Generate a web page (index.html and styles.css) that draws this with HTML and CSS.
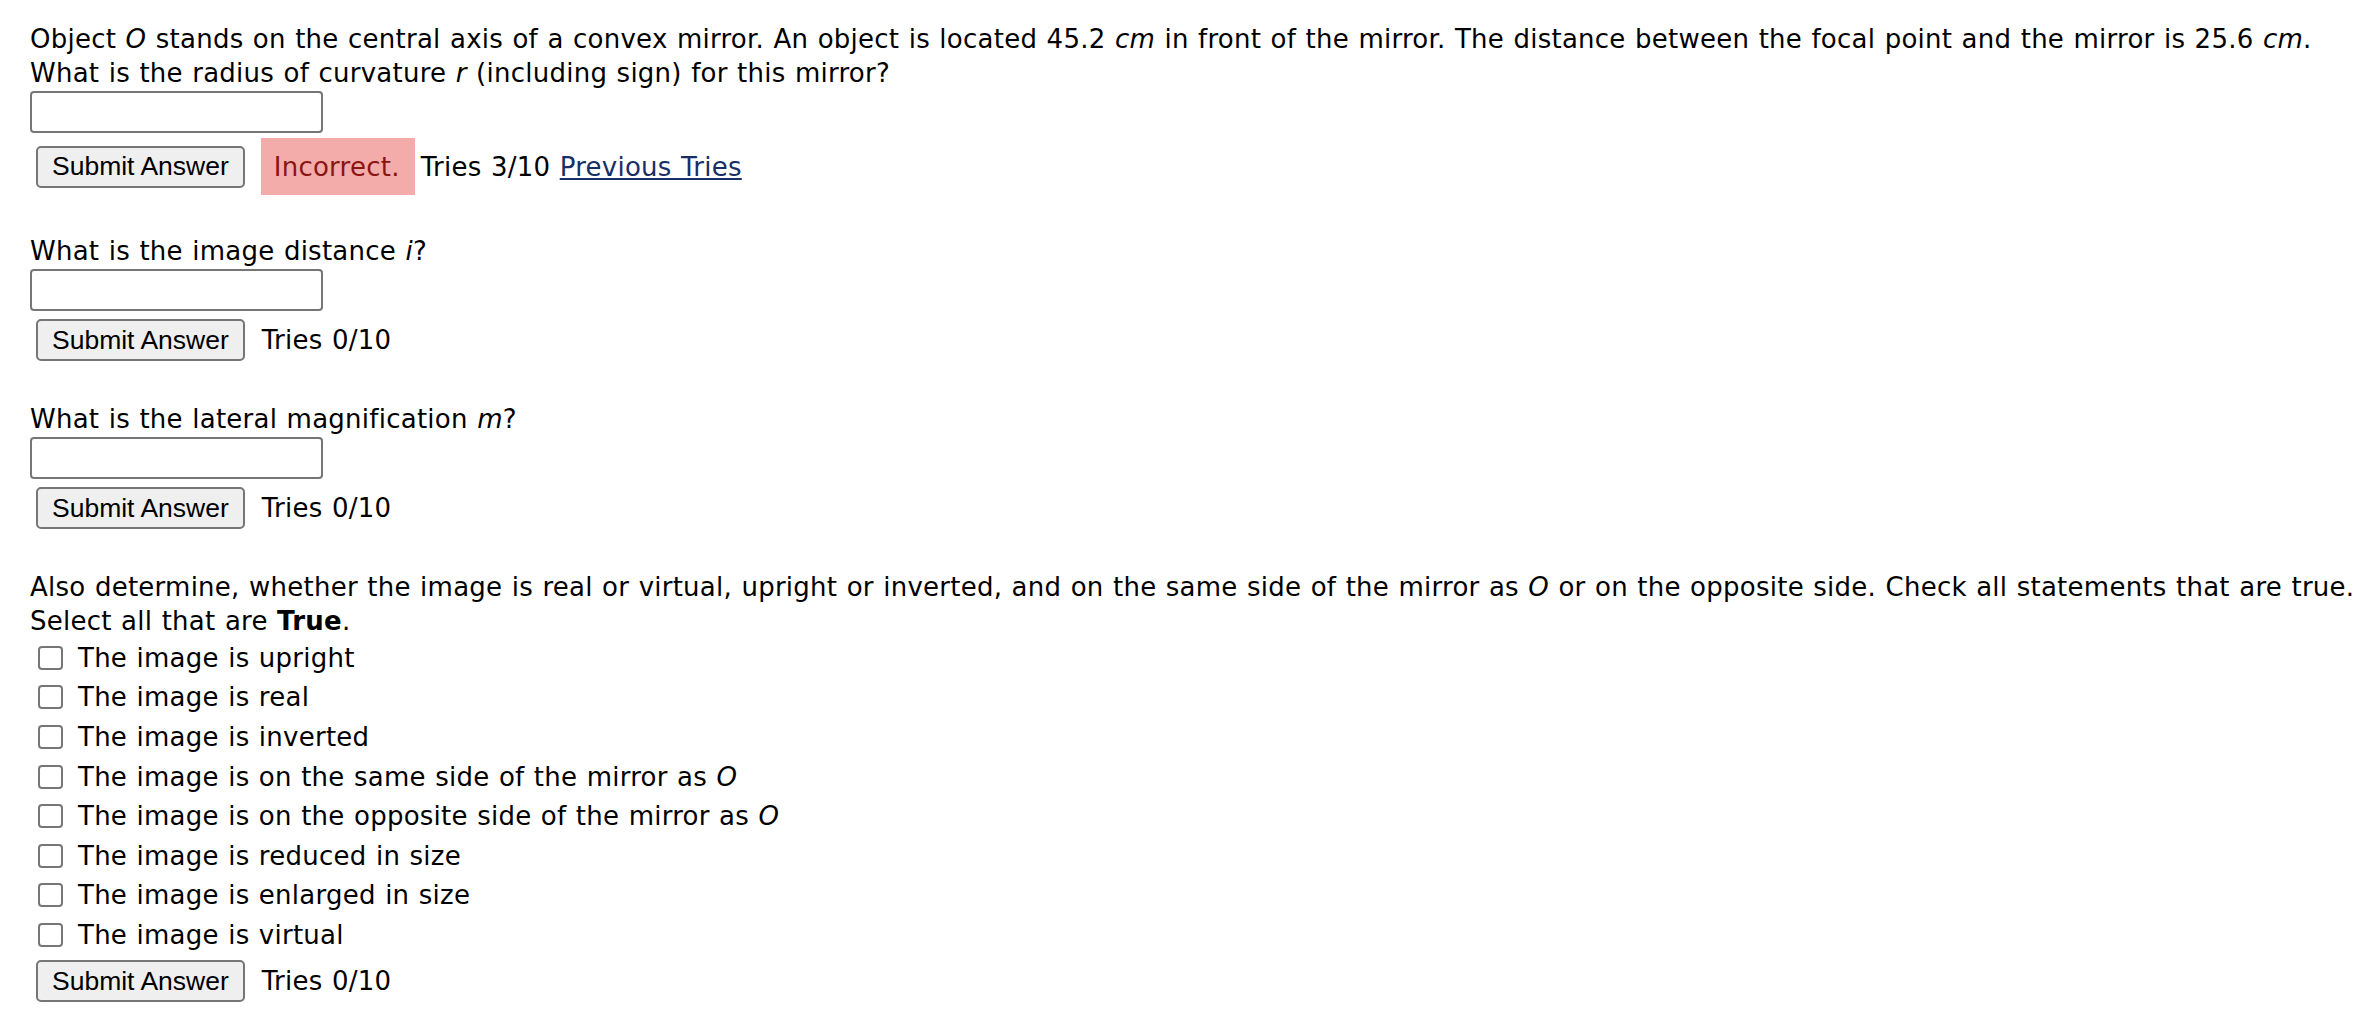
FILE: index.html
```html
<!DOCTYPE html>
<html>
<head>
	<meta charset="utf-8">
	<title>Convex mirror</title>
	<link rel="stylesheet" href="styles.css">
</head>
<body>
	<div class="problem">

		<div class="part">
			<div class="qtext">
				Object <i>O</i> stands on the central axis of a convex mirror. An object is located 45.2 <i>cm</i> in front of the mirror. The distance between the focal point and the mirror is 25.6 <i>cm</i>.<br>
				What is the radius of curvature <i>r</i> (including sign) for this mirror?
			</div>
			<input type="text" class="answer">
			<div class="actions first">
				<button class="submit">Submit Answer</button>
				<span class="incorrect">Incorrect.</span>
				<span class="tries">Tries 3/10 <a href="#">Previous Tries</a></span>
			</div>
		</div>

		<div class="part">
			<div class="qtext">What is the image distance <i>i</i>?</div>
			<input type="text" class="answer">
			<div class="actions">
				<button class="submit">Submit Answer</button>
				<span class="tries">Tries 0/10</span>
			</div>
		</div>

		<div class="part">
			<div class="qtext">What is the lateral magnification <i>m</i>?</div>
			<input type="text" class="answer">
			<div class="actions">
				<button class="submit">Submit Answer</button>
				<span class="tries">Tries 0/10</span>
			</div>
		</div>

		<div class="part">
			<div class="qtext">
				Also determine, whether the image is real or virtual, upright or inverted, and on the same side of the mirror as <i>O</i> or on the opposite side. Check all statements that are true.<br>
				Select all that are <b>True</b>.
			</div>
			<ul class="choices">
				<li><input type="checkbox"><span>The image is upright</span></li>
				<li><input type="checkbox"><span>The image is real</span></li>
				<li><input type="checkbox"><span>The image is inverted</span></li>
				<li><input type="checkbox"><span>The image is on the same side of the mirror as <i>O</i></span></li>
				<li><input type="checkbox"><span>The image is on the opposite side of the mirror as <i>O</i></span></li>
				<li><input type="checkbox"><span>The image is reduced in size</span></li>
				<li><input type="checkbox"><span>The image is enlarged in size</span></li>
				<li><input type="checkbox"><span>The image is virtual</span></li>
			</ul>
			<div class="actions last">
				<button class="submit">Submit Answer</button>
				<span class="tries">Tries 0/10</span>
			</div>
		</div>

	</div>
</body>
</html>
```

FILE: styles.css
```css
 /* Страница */
* {
	margin: 0;
	padding: 0;
	box-sizing: border-box;
}

html, body {
	width: 100%;
	height: 100%;
	background-color: white;
}

body {
	color: black;
	font-family: "DejaVu Sans", Verdana, sans-serif;
	font-size: 26px;
	line-height: 34px;
	letter-spacing: 0.25px;
	word-spacing: 0.9px;
}

.problem {
	padding: 22px 0 0 30px;
}

.part + .part {
	margin-top: 41px;
}

.part:first-child {
	margin-bottom: -2px;
}

.qtext {
	white-space: nowrap;
}

 /* Поле ответа */

.answer {
	display: block;
	width: 293px;
	height: 42px;
	margin-top: 1px;
	border: 2px solid #767676;
	border-radius: 4px;
	background-color: white;
	font: inherit;
}

 /* Кнопка и попытки */

.actions {
	display: flex;
	align-items: center;
	margin-top: 8px;
}

.actions.first {
	margin-top: 5px;
}

.actions.last {
	margin-top: 5px;
}

.submit {
	flex: none;
	height: 42px;
	padding: 0 14px;
	margin-left: 6px;
	border: 2px solid #767676;
	border-radius: 5px;
	background-color: #efefef;
	color: black;
	font-family: "Liberation Sans", Arial, sans-serif;
	font-size: 26.5px;
	line-height: 1;
	letter-spacing: normal;
	word-spacing: normal;
}

.incorrect {
	display: flex;
	align-items: center;
	height: 57px;
	padding: 0 15px 0 13px;
	margin-left: 16px;
	background-color: #f3acaa;
	color: #8b1414;
}

.tries {
	margin-left: 17px;
	white-space: pre;
}

.incorrect + .tries {
	margin-left: 6px;
}

.tries a {
	color: #172f66;
}

 /* Варианты */

ul.choices {
	list-style: none;
}

ul.choices li {
	display: flex;
	align-items: center;
	height: 39.6px;
	white-space: nowrap;
}

ul.choices input {
	-webkit-appearance: none;
	appearance: none;
	flex: none;
	width: 25px;
	min-width: 25px;
	height: 24px;
	margin: 0 15px 0 8px;
	border: 2px solid #767676;
	border-radius: 4px;
	background-color: white;
}
```
